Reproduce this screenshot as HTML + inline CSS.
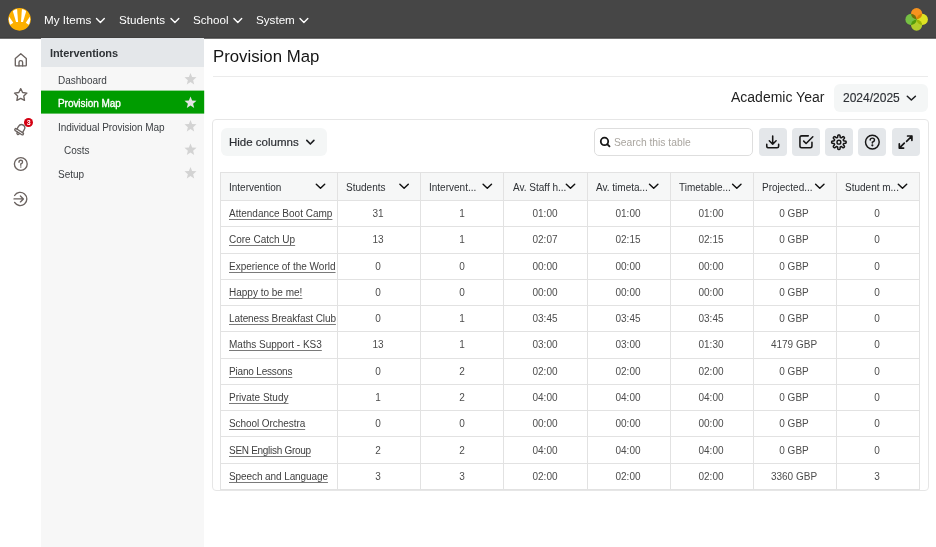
<!DOCTYPE html>
<html><head><meta charset="utf-8">
<style>
*{box-sizing:border-box;margin:0;padding:0}
html,body{width:936px;height:547px;overflow:hidden;background:#fff;font-family:"Liberation Sans",sans-serif;color:#333}
.a{position:absolute;white-space:nowrap}
.t{position:absolute;white-space:nowrap;line-height:1}
body>*{will-change:transform}
</style></head><body>

<svg class="a" style="left:0;top:0" width="936" height="40"><rect x="0" y="0" width="936" height="38.5" fill="#464646"/><rect x="0" y="37" width="936" height="1.5" fill="#3f3f3f"/></svg>
<svg class="a" style="left:7px;top:7px" width="25" height="25" viewBox="0 0 547 547">
<defs><clipPath id="lc"><circle cx="274" cy="270" r="234"/></clipPath></defs>
<circle cx="274" cy="270" r="247" fill="#fdb000"/>
<g clip-path="url(#lc)" fill="#fff">
<polygon points="95,-20 215,-40 242,328 198,328"/>
<polygon points="453,-20 333,-40 306,328 350,328"/>
<polygon points="-10,126 137,342 -15,455"/>
<polygon points="558,126 411,342 563,455"/>
</g></svg>
<div class="t" style="left:44.0px;top:14px;font-size:11.65px;color:#fff">My Items</div>
<div class="t" style="left:118.5px;top:14px;font-size:11.65px;color:#fff">Students</div>
<div class="t" style="left:193.3px;top:14px;font-size:11.65px;color:#fff">School</div>
<div class="t" style="left:255.6px;top:14px;font-size:11.65px;color:#fff">System</div>
<svg class="a" style="left:0;top:0" width="936" height="38" fill="none" stroke="#fff" stroke-width="1.4" stroke-linecap="round" stroke-linejoin="round">
<path d="M96.5 18.6 L100.4 22.5 L104.3 18.6"/>
<path d="M171.0 18.6 L174.9 22.5 L178.8 18.6"/>
<path d="M233.9 18.6 L237.8 22.5 L241.70000000000002 18.6"/>
<path d="M300.0 18.6 L303.9 22.5 L307.8 18.6"/>
</svg>
<svg class="a" style="left:896px;top:0" width="40" height="38" viewBox="896 0 40 38">
<g style="isolation:isolate">
<circle cx="916.6" cy="13.6" r="5.6" fill="#f7931e"/>
<circle cx="911" cy="19.4" r="5.6" fill="#76c043" style="mix-blend-mode:multiply"/>
<circle cx="922.3" cy="19.4" r="5.6" fill="#dfe223" style="mix-blend-mode:multiply"/>
<circle cx="916.6" cy="25.1" r="5.6" fill="#b3cd2b" style="mix-blend-mode:multiply"/>
</g>
</svg>
<svg class="a" style="left:0;top:38px" width="41" height="200" viewBox="0 38 41 200" fill="none" stroke="#6b6360" stroke-width="1.35" stroke-linejoin="round" stroke-linecap="round">
<path d="M15.3 58.6 L20.8 53.8 L26.3 58.6 L26.3 65.2 Q26.3 65.9 25.6 65.9 L16 65.9 Q15.3 65.9 15.3 65.2 Z"/>
<path d="M19 65.9 L19 62.2 Q19 60.6 20.8 60.6 Q22.6 60.6 22.6 62.2 L22.6 65.9"/>
<path d="M20.7 88.6 L22.6 92.5 L26.9 93.1 L23.8 96.1 L24.5 100.4 L20.7 98.4 L16.9 100.4 L17.6 96.1 L14.5 93.1 L18.8 92.5 Z"/>
<g transform="rotate(32 20.5 129.5)">
<path d="M17.2 131 L17.2 128 Q17.2 124.3 20.5 124.3 Q23.8 124.3 23.8 128 L23.8 131"/>
<rect x="15.6" y="131" width="9.8" height="2.2" rx="1"/>
<path d="M19.2 133.4 Q19.2 135.2 20.5 135.2 Q21.8 135.2 21.8 133.4"/>
</g>
<circle cx="20.8" cy="164" r="6.4"/>
<path d="M19 162.3 Q19 160.2 20.8 160.2 Q22.6 160.2 22.6 162 Q22.6 163.3 20.8 164 L20.8 165.2"/>
<path d="M14.6 195.5 A6.6 6.6 0 1 1 14.6 202.4"/>
<path d="M14 198.9 L23.4 198.9 M20.4 195.9 L23.4 198.9 L20.4 201.9"/>
</svg>
<svg class="a" style="left:0;top:0" width="41" height="220"><circle cx="20.8" cy="167.1" r=".75" fill="#6b6360"/></svg>
<div class="a" style="left:24.1px;top:118.1px;width:9.2px;height:9.2px;border-radius:50%;background:#d40012;color:#fff;font-size:7px;font-weight:bold;line-height:9.4px;text-align:center">3</div>
<div class="a" style="left:41px;top:38px;width:163.2px;height:509px;background:#f7f7f7"></div>
<div class="a" style="left:41px;top:38px;width:163.2px;height:29.2px;background:#e4e7ea"></div>
<div class="t" style="left:49.6px;top:48px;font-size:11px;font-weight:bold;letter-spacing:-0.08px;color:#2f3337">Interventions</div>
<svg class="a" style="left:41px;top:89px" width="164" height="27"><rect x="0" y="1.6" width="163.2" height="23" fill="#009c00"/></svg>
<div class="t" style="left:58px;top:76px;font-size:10px;letter-spacing:0px;color:#3d4044">Dashboard</div>
<div class="t" style="left:58px;top:99px;font-size:10px;-webkit-text-stroke:0.35px #fff;letter-spacing:-0.05px;color:#fff">Provision Map</div>
<div class="t" style="left:58px;top:123px;font-size:10px;letter-spacing:-0.08px;color:#3d4044">Individual Provision Map</div>
<div class="t" style="left:63.5px;top:146px;font-size:10px;letter-spacing:0px;color:#3d4044">Costs</div>
<div class="t" style="left:58px;top:170px;font-size:10px;letter-spacing:0px;color:#3d4044">Setup</div>
<svg class="a" style="left:0;top:0" width="210" height="200">
<polygon points="190.50,73.00 192.12,77.08 196.49,77.35 193.12,80.15 194.20,84.40 190.50,82.05 186.80,84.40 187.88,80.15 184.51,77.35 188.88,77.08" fill="#d3d3d3"/>
<polygon points="190.50,96.50 192.12,100.58 196.49,100.85 193.12,103.65 194.20,107.90 190.50,105.55 186.80,107.90 187.88,103.65 184.51,100.85 188.88,100.58" fill="#e4e4e4"/>
<polygon points="190.50,120.00 192.12,124.08 196.49,124.35 193.12,127.15 194.20,131.40 190.50,129.05 186.80,131.40 187.88,127.15 184.51,124.35 188.88,124.08" fill="#d3d3d3"/>
<polygon points="190.50,143.50 192.12,147.58 196.49,147.85 193.12,150.65 194.20,154.90 190.50,152.55 186.80,154.90 187.88,150.65 184.51,147.85 188.88,147.58" fill="#d3d3d3"/>
<polygon points="190.50,167.00 192.12,171.08 196.49,171.35 193.12,174.15 194.20,178.40 190.50,176.05 186.80,178.40 187.88,174.15 184.51,171.35 188.88,171.08" fill="#d3d3d3"/>
</svg>
<div class="t" style="left:212.8px;top:49px;font-size:16.8px;color:#151515">Provision Map</div>
<div class="a" style="left:212.5px;top:75.9px;width:715.2px;height:1.4px;background:#ebebeb"></div>
<div class="t" style="left:730.6px;top:90px;font-size:14px;color:#1f1f1f">Academic Year</div>
<div class="a" style="left:833.6px;top:84px;width:93.7px;height:27.6px;background:#f4f6f6;border-radius:6px"></div>
<div class="t" style="left:842.6px;top:92px;font-size:12px;-webkit-text-stroke:0.15px #2d3035;color:#2d3035">2024/2025</div>
<div class="a" style="left:212.4px;top:119.2px;width:716.6px;height:372.30px;border:1px solid #e6e6e6;border-radius:4px"></div>
<div class="a" style="left:221px;top:128px;width:106px;height:27.8px;background:#f4f6f6;border-radius:6px"></div>
<div class="t" style="left:229px;top:136.6px;font-size:11.5px;-webkit-text-stroke:0.2px #2d3035;color:#2d3035">Hide columns</div>
<div class="a" style="left:594.2px;top:128.3px;width:158.8px;height:27.5px;border:1px solid #dedede;border-radius:5px"></div>
<div class="t" style="left:613.6px;top:138px;font-size:10.3px;color:#a9a59f">Search this table</div>
<div class="a" style="left:758.9px;top:128.3px;width:27.6px;height:27.5px;background:#e4e7ea;border-radius:4px"></div>
<div class="a" style="left:792.0px;top:128.3px;width:27.6px;height:27.5px;background:#e4e7ea;border-radius:4px"></div>
<div class="a" style="left:825.1px;top:128.3px;width:27.6px;height:27.5px;background:#e4e7ea;border-radius:4px"></div>
<div class="a" style="left:858.3px;top:128.3px;width:27.6px;height:27.5px;background:#e4e7ea;border-radius:4px"></div>
<div class="a" style="left:891.6px;top:128.3px;width:27.6px;height:27.5px;background:#e4e7ea;border-radius:4px"></div>
<svg class="a" style="left:0;top:0" width="936" height="200" fill="none" stroke="#161616" stroke-width="1.55" stroke-linecap="round" stroke-linejoin="round">
<path d="M306.8 140.4 L310.35 144 L313.9 140.4" stroke="#1d1f22" stroke-width="1.65"/>
<path d="M907.3 96.2 L911.35 100 L915.4 96.2" stroke="#1d1f22"/>
<circle cx="604.5" cy="141.4" r="3.7" stroke-width="1.8"/>
<path d="M607.4 144.3 L609.5 146.4" stroke-width="1.8"/>
<path d="M766.75 144.3 V146.2 Q766.75 147.75 768.3 147.75 H777.1 Q778.65 147.75 778.65 146.2 V144.3"/>
<path d="M772.7 135.9 V144.2 M769.3 140.8 L772.7 144.2 L776.1 140.8"/>
<path d="M811.95 142.2 V146 Q811.95 147.75 810.2 147.75 H801.7 Q799.95 147.75 799.95 146 V137.6 Q799.95 135.85 801.7 135.85 H808.3"/>
<path d="M803.7 141.1 L806.1 143.5 L812.8 136.8"/>
<path d="M838.90 134.95 L839.09 134.96 L839.28 134.97 L839.47 135.01 L839.65 135.08 L839.82 135.23 L839.96 135.51 L840.05 135.98 L840.10 136.55 L840.14 137.02 L840.21 137.31 L840.30 137.46 L840.41 137.55 L840.52 137.62 L840.64 137.67 L840.76 137.72 L840.87 137.77 L840.99 137.81 L841.12 137.84 L841.26 137.86 L841.43 137.81 L841.68 137.66 L842.04 137.36 L842.48 136.98 L842.88 136.72 L843.18 136.62 L843.40 136.64 L843.58 136.72 L843.74 136.82 L843.89 136.94 L844.03 137.07 L844.16 137.21 L844.28 137.36 L844.38 137.52 L844.46 137.70 L844.48 137.92 L844.38 138.22 L844.12 138.62 L843.74 139.06 L843.44 139.42 L843.29 139.67 L843.24 139.84 L843.26 139.98 L843.29 140.11 L843.33 140.23 L843.38 140.34 L843.43 140.46 L843.48 140.58 L843.55 140.69 L843.64 140.80 L843.79 140.89 L844.08 140.96 L844.55 141.00 L845.12 141.05 L845.59 141.14 L845.87 141.28 L846.02 141.45 L846.09 141.63 L846.13 141.82 L846.14 142.01 L846.15 142.20 L846.14 142.39 L846.13 142.58 L846.09 142.77 L846.02 142.95 L845.87 143.12 L845.59 143.26 L845.12 143.35 L844.55 143.40 L844.08 143.44 L843.79 143.51 L843.64 143.60 L843.55 143.71 L843.48 143.82 L843.43 143.94 L843.38 144.06 L843.33 144.17 L843.29 144.29 L843.26 144.42 L843.24 144.56 L843.29 144.73 L843.44 144.98 L843.74 145.34 L844.12 145.78 L844.38 146.18 L844.48 146.48 L844.46 146.70 L844.38 146.88 L844.28 147.04 L844.16 147.19 L844.03 147.33 L843.89 147.46 L843.74 147.58 L843.58 147.68 L843.40 147.76 L843.18 147.78 L842.88 147.68 L842.48 147.42 L842.04 147.04 L841.68 146.74 L841.43 146.59 L841.26 146.54 L841.12 146.56 L840.99 146.59 L840.87 146.63 L840.76 146.68 L840.64 146.73 L840.52 146.78 L840.41 146.85 L840.30 146.94 L840.21 147.09 L840.14 147.38 L840.10 147.85 L840.05 148.42 L839.96 148.89 L839.82 149.17 L839.65 149.32 L839.47 149.39 L839.28 149.43 L839.09 149.44 L838.90 149.45 L838.71 149.44 L838.52 149.43 L838.33 149.39 L838.15 149.32 L837.98 149.17 L837.84 148.89 L837.75 148.42 L837.70 147.85 L837.66 147.38 L837.59 147.09 L837.50 146.94 L837.39 146.85 L837.28 146.78 L837.16 146.73 L837.04 146.68 L836.93 146.63 L836.81 146.59 L836.68 146.56 L836.54 146.54 L836.37 146.59 L836.12 146.74 L835.76 147.04 L835.32 147.42 L834.92 147.68 L834.62 147.78 L834.40 147.76 L834.22 147.68 L834.06 147.58 L833.91 147.46 L833.77 147.33 L833.64 147.19 L833.52 147.04 L833.42 146.88 L833.34 146.70 L833.32 146.48 L833.42 146.18 L833.68 145.78 L834.06 145.34 L834.36 144.98 L834.51 144.73 L834.56 144.56 L834.54 144.42 L834.51 144.29 L834.47 144.17 L834.42 144.06 L834.37 143.94 L834.32 143.82 L834.25 143.71 L834.16 143.60 L834.01 143.51 L833.72 143.44 L833.25 143.40 L832.68 143.35 L832.21 143.26 L831.93 143.12 L831.78 142.95 L831.71 142.77 L831.67 142.58 L831.66 142.39 L831.65 142.20 L831.66 142.01 L831.67 141.82 L831.71 141.63 L831.78 141.45 L831.93 141.28 L832.21 141.14 L832.68 141.05 L833.25 141.00 L833.72 140.96 L834.01 140.89 L834.16 140.80 L834.25 140.69 L834.32 140.58 L834.37 140.46 L834.42 140.34 L834.47 140.23 L834.51 140.11 L834.54 139.98 L834.56 139.84 L834.51 139.67 L834.36 139.42 L834.06 139.06 L833.68 138.62 L833.42 138.22 L833.32 137.92 L833.34 137.70 L833.42 137.52 L833.52 137.36 L833.64 137.21 L833.77 137.07 L833.91 136.94 L834.06 136.82 L834.22 136.72 L834.40 136.64 L834.62 136.62 L834.92 136.72 L835.32 136.98 L835.76 137.36 L836.12 137.66 L836.37 137.81 L836.54 137.86 L836.68 137.84 L836.81 137.81 L836.93 137.77 L837.04 137.72 L837.16 137.67 L837.28 137.62 L837.39 137.55 L837.50 137.46 L837.59 137.31 L837.66 137.02 L837.70 136.55 L837.75 135.98 L837.84 135.51 L837.98 135.23 L838.15 135.08 L838.33 135.01 L838.52 134.97 L838.71 134.96Z" stroke-width="1.5"/>
<circle cx="838.9" cy="142.2" r="1.9" stroke-width="1.45"/>
<circle cx="872.35" cy="142.05" r="6.85" stroke-width="1.45"/>
<path d="M870.2 140.1 Q870.2 138.1 872.35 138.1 Q874.5 138.1 874.5 140.1 Q874.5 141.5 872.35 142.2 V143" stroke-width="1.45"/>
<circle cx="872.35" cy="145.3" r=".5" stroke-width="1.2"/>
<path d="M907.6 136 H911.9 V140.3 M911.9 136 L906.6 141.3" stroke-width="1.7"/>
<path d="M899.3 143.9 V148.1 H903.6 M899.3 148.1 L904.3 143.1" stroke-width="1.7"/>
</svg>
<div class="a" style="left:220px;top:172px;width:699.00px;height:28.00px;background:#f6f7f7"></div>
<div class="a" style="left:220px;top:172px;width:1px;height:317.97px;background:#e2e2e2"></div>
<div class="a" style="left:337px;top:172px;width:1px;height:317.97px;background:#e2e2e2"></div>
<div class="a" style="left:420.2px;top:172px;width:1px;height:317.97px;background:#e2e2e2"></div>
<div class="a" style="left:503.4px;top:172px;width:1px;height:317.97px;background:#e2e2e2"></div>
<div class="a" style="left:587px;top:172px;width:1px;height:317.97px;background:#e2e2e2"></div>
<div class="a" style="left:670.2px;top:172px;width:1px;height:317.97px;background:#e2e2e2"></div>
<div class="a" style="left:753.3px;top:172px;width:1px;height:317.97px;background:#e2e2e2"></div>
<div class="a" style="left:836.3px;top:172px;width:1px;height:317.97px;background:#e2e2e2"></div>
<div class="a" style="left:919px;top:172px;width:1px;height:317.97px;background:#e2e2e2"></div>
<div class="a" style="left:220px;top:172.00px;width:700.00px;height:1px;background:#e2e2e2"></div>
<div class="a" style="left:220px;top:200.00px;width:700.00px;height:1px;background:#e2e2e2"></div>
<div class="a" style="left:220px;top:226.27px;width:700.00px;height:1px;background:#e2e2e2"></div>
<div class="a" style="left:220px;top:252.54px;width:700.00px;height:1px;background:#e2e2e2"></div>
<div class="a" style="left:220px;top:278.81px;width:700.00px;height:1px;background:#e2e2e2"></div>
<div class="a" style="left:220px;top:305.08px;width:700.00px;height:1px;background:#e2e2e2"></div>
<div class="a" style="left:220px;top:331.35px;width:700.00px;height:1px;background:#e2e2e2"></div>
<div class="a" style="left:220px;top:357.62px;width:700.00px;height:1px;background:#e2e2e2"></div>
<div class="a" style="left:220px;top:383.89px;width:700.00px;height:1px;background:#e2e2e2"></div>
<div class="a" style="left:220px;top:410.16px;width:700.00px;height:1px;background:#e2e2e2"></div>
<div class="a" style="left:220px;top:436.43px;width:700.00px;height:1px;background:#e2e2e2"></div>
<div class="a" style="left:220px;top:462.70px;width:700.00px;height:1px;background:#e2e2e2"></div>
<div class="a" style="left:220px;top:488.97px;width:700.00px;height:1px;background:#e2e2e2"></div>
<div class="t" style="left:228.80px;top:183.00px;font-size:10px;color:#2f3236">Intervention</div>
<div class="t" style="left:345.80px;top:183.00px;font-size:10px;color:#2f3236">Students</div>
<div class="t" style="left:429.40px;top:183.00px;font-size:10px;color:#2f3236">Intervent...</div>
<div class="t" style="left:512.60px;top:183.00px;font-size:10px;color:#2f3236">Av. Staff h...</div>
<div class="t" style="left:595.80px;top:183.00px;font-size:10px;color:#2f3236">Av. timeta...</div>
<div class="t" style="left:679.00px;top:183.00px;font-size:10px;color:#2f3236">Timetable...</div>
<div class="t" style="left:762.10px;top:183.00px;font-size:10px;color:#2f3236">Projected...</div>
<div class="t" style="left:845.10px;top:183.00px;font-size:10px;color:#2f3236">Student m...</div>
<svg class="a" style="left:0;top:0" width="936" height="200" fill="none" stroke="#111" stroke-width="1.45" stroke-linecap="round" stroke-linejoin="round">
<path d="M316.30 184.3 L320.50 188.3 L324.70 184.3"/>
<path d="M399.90 184.3 L404.10 188.3 L408.30 184.3"/>
<path d="M483.10 184.3 L487.30 188.3 L491.50 184.3"/>
<path d="M566.30 184.3 L570.50 188.3 L574.70 184.3"/>
<path d="M649.50 184.3 L653.70 188.3 L657.90 184.3"/>
<path d="M732.60 184.3 L736.80 188.3 L741.00 184.3"/>
<path d="M815.60 184.3 L819.80 188.3 L824.00 184.3"/>
<path d="M898.30 184.3 L902.50 188.3 L906.70 184.3"/>
</svg>
<div class="t" style="left:228.60px;top:209.00px;font-size:10px;letter-spacing:0px;color:#3f3f3f;text-decoration:underline;text-decoration-color:#7a7a7a;text-underline-offset:1.5px">Attendance Boot Camp</div>
<div class="t" style="left:338.30px;width:80px;text-align:center;top:209.00px;font-size:10px;color:#4d4d4d">31</div>
<div class="t" style="left:421.70px;width:80px;text-align:center;top:209.00px;font-size:10px;color:#4d4d4d">1</div>
<div class="t" style="left:504.90px;width:80px;text-align:center;top:209.00px;font-size:10px;color:#4d4d4d">01:00</div>
<div class="t" style="left:588.10px;width:80px;text-align:center;top:209.00px;font-size:10px;color:#4d4d4d">01:00</div>
<div class="t" style="left:671.25px;width:80px;text-align:center;top:209.00px;font-size:10px;color:#4d4d4d">01:00</div>
<div class="t" style="left:754.30px;width:80px;text-align:center;top:209.00px;font-size:10px;color:#4d4d4d">0 GBP</div>
<div class="t" style="left:837.15px;width:80px;text-align:center;top:209.00px;font-size:10px;color:#4d4d4d">0</div>
<div class="t" style="left:228.60px;top:235.00px;font-size:10px;letter-spacing:0px;color:#3f3f3f;text-decoration:underline;text-decoration-color:#7a7a7a;text-underline-offset:1.5px">Core Catch Up</div>
<div class="t" style="left:338.30px;width:80px;text-align:center;top:235.00px;font-size:10px;color:#4d4d4d">13</div>
<div class="t" style="left:421.70px;width:80px;text-align:center;top:235.00px;font-size:10px;color:#4d4d4d">1</div>
<div class="t" style="left:504.90px;width:80px;text-align:center;top:235.00px;font-size:10px;color:#4d4d4d">02:07</div>
<div class="t" style="left:588.10px;width:80px;text-align:center;top:235.00px;font-size:10px;color:#4d4d4d">02:15</div>
<div class="t" style="left:671.25px;width:80px;text-align:center;top:235.00px;font-size:10px;color:#4d4d4d">02:15</div>
<div class="t" style="left:754.30px;width:80px;text-align:center;top:235.00px;font-size:10px;color:#4d4d4d">0 GBP</div>
<div class="t" style="left:837.15px;width:80px;text-align:center;top:235.00px;font-size:10px;color:#4d4d4d">0</div>
<div class="t" style="left:228.60px;top:262.00px;font-size:10px;letter-spacing:0px;color:#3f3f3f;text-decoration:underline;text-decoration-color:#7a7a7a;text-underline-offset:1.5px">Experience of the World</div>
<div class="t" style="left:338.30px;width:80px;text-align:center;top:262.00px;font-size:10px;color:#4d4d4d">0</div>
<div class="t" style="left:421.70px;width:80px;text-align:center;top:262.00px;font-size:10px;color:#4d4d4d">0</div>
<div class="t" style="left:504.90px;width:80px;text-align:center;top:262.00px;font-size:10px;color:#4d4d4d">00:00</div>
<div class="t" style="left:588.10px;width:80px;text-align:center;top:262.00px;font-size:10px;color:#4d4d4d">00:00</div>
<div class="t" style="left:671.25px;width:80px;text-align:center;top:262.00px;font-size:10px;color:#4d4d4d">00:00</div>
<div class="t" style="left:754.30px;width:80px;text-align:center;top:262.00px;font-size:10px;color:#4d4d4d">0 GBP</div>
<div class="t" style="left:837.15px;width:80px;text-align:center;top:262.00px;font-size:10px;color:#4d4d4d">0</div>
<div class="t" style="left:228.60px;top:288.00px;font-size:10px;letter-spacing:0px;color:#3f3f3f;text-decoration:underline;text-decoration-color:#7a7a7a;text-underline-offset:1.5px">Happy to be me!</div>
<div class="t" style="left:338.30px;width:80px;text-align:center;top:288.00px;font-size:10px;color:#4d4d4d">0</div>
<div class="t" style="left:421.70px;width:80px;text-align:center;top:288.00px;font-size:10px;color:#4d4d4d">0</div>
<div class="t" style="left:504.90px;width:80px;text-align:center;top:288.00px;font-size:10px;color:#4d4d4d">00:00</div>
<div class="t" style="left:588.10px;width:80px;text-align:center;top:288.00px;font-size:10px;color:#4d4d4d">00:00</div>
<div class="t" style="left:671.25px;width:80px;text-align:center;top:288.00px;font-size:10px;color:#4d4d4d">00:00</div>
<div class="t" style="left:754.30px;width:80px;text-align:center;top:288.00px;font-size:10px;color:#4d4d4d">0 GBP</div>
<div class="t" style="left:837.15px;width:80px;text-align:center;top:288.00px;font-size:10px;color:#4d4d4d">0</div>
<div class="t" style="left:228.60px;top:314.00px;font-size:10px;letter-spacing:-0.09px;color:#3f3f3f;text-decoration:underline;text-decoration-color:#7a7a7a;text-underline-offset:1.5px">Lateness Breakfast Club</div>
<div class="t" style="left:338.30px;width:80px;text-align:center;top:314.00px;font-size:10px;color:#4d4d4d">0</div>
<div class="t" style="left:421.70px;width:80px;text-align:center;top:314.00px;font-size:10px;color:#4d4d4d">1</div>
<div class="t" style="left:504.90px;width:80px;text-align:center;top:314.00px;font-size:10px;color:#4d4d4d">03:45</div>
<div class="t" style="left:588.10px;width:80px;text-align:center;top:314.00px;font-size:10px;color:#4d4d4d">03:45</div>
<div class="t" style="left:671.25px;width:80px;text-align:center;top:314.00px;font-size:10px;color:#4d4d4d">03:45</div>
<div class="t" style="left:754.30px;width:80px;text-align:center;top:314.00px;font-size:10px;color:#4d4d4d">0 GBP</div>
<div class="t" style="left:837.15px;width:80px;text-align:center;top:314.00px;font-size:10px;color:#4d4d4d">0</div>
<div class="t" style="left:228.60px;top:340.00px;font-size:10px;letter-spacing:0px;color:#3f3f3f;text-decoration:underline;text-decoration-color:#7a7a7a;text-underline-offset:1.5px">Maths Support - KS3</div>
<div class="t" style="left:338.30px;width:80px;text-align:center;top:340.00px;font-size:10px;color:#4d4d4d">13</div>
<div class="t" style="left:421.70px;width:80px;text-align:center;top:340.00px;font-size:10px;color:#4d4d4d">1</div>
<div class="t" style="left:504.90px;width:80px;text-align:center;top:340.00px;font-size:10px;color:#4d4d4d">03:00</div>
<div class="t" style="left:588.10px;width:80px;text-align:center;top:340.00px;font-size:10px;color:#4d4d4d">03:00</div>
<div class="t" style="left:671.25px;width:80px;text-align:center;top:340.00px;font-size:10px;color:#4d4d4d">01:30</div>
<div class="t" style="left:754.30px;width:80px;text-align:center;top:340.00px;font-size:10px;color:#4d4d4d">4179 GBP</div>
<div class="t" style="left:837.15px;width:80px;text-align:center;top:340.00px;font-size:10px;color:#4d4d4d">0</div>
<div class="t" style="left:228.60px;top:367.00px;font-size:10px;letter-spacing:-0.18px;color:#3f3f3f;text-decoration:underline;text-decoration-color:#7a7a7a;text-underline-offset:1.5px">Piano Lessons</div>
<div class="t" style="left:338.30px;width:80px;text-align:center;top:367.00px;font-size:10px;color:#4d4d4d">0</div>
<div class="t" style="left:421.70px;width:80px;text-align:center;top:367.00px;font-size:10px;color:#4d4d4d">2</div>
<div class="t" style="left:504.90px;width:80px;text-align:center;top:367.00px;font-size:10px;color:#4d4d4d">02:00</div>
<div class="t" style="left:588.10px;width:80px;text-align:center;top:367.00px;font-size:10px;color:#4d4d4d">02:00</div>
<div class="t" style="left:671.25px;width:80px;text-align:center;top:367.00px;font-size:10px;color:#4d4d4d">02:00</div>
<div class="t" style="left:754.30px;width:80px;text-align:center;top:367.00px;font-size:10px;color:#4d4d4d">0 GBP</div>
<div class="t" style="left:837.15px;width:80px;text-align:center;top:367.00px;font-size:10px;color:#4d4d4d">0</div>
<div class="t" style="left:228.60px;top:393.00px;font-size:10px;letter-spacing:0px;color:#3f3f3f;text-decoration:underline;text-decoration-color:#7a7a7a;text-underline-offset:1.5px">Private Study</div>
<div class="t" style="left:338.30px;width:80px;text-align:center;top:393.00px;font-size:10px;color:#4d4d4d">1</div>
<div class="t" style="left:421.70px;width:80px;text-align:center;top:393.00px;font-size:10px;color:#4d4d4d">2</div>
<div class="t" style="left:504.90px;width:80px;text-align:center;top:393.00px;font-size:10px;color:#4d4d4d">04:00</div>
<div class="t" style="left:588.10px;width:80px;text-align:center;top:393.00px;font-size:10px;color:#4d4d4d">04:00</div>
<div class="t" style="left:671.25px;width:80px;text-align:center;top:393.00px;font-size:10px;color:#4d4d4d">04:00</div>
<div class="t" style="left:754.30px;width:80px;text-align:center;top:393.00px;font-size:10px;color:#4d4d4d">0 GBP</div>
<div class="t" style="left:837.15px;width:80px;text-align:center;top:393.00px;font-size:10px;color:#4d4d4d">0</div>
<div class="t" style="left:228.60px;top:419.00px;font-size:10px;letter-spacing:-0.07px;color:#3f3f3f;text-decoration:underline;text-decoration-color:#7a7a7a;text-underline-offset:1.5px">School Orchestra</div>
<div class="t" style="left:338.30px;width:80px;text-align:center;top:419.00px;font-size:10px;color:#4d4d4d">0</div>
<div class="t" style="left:421.70px;width:80px;text-align:center;top:419.00px;font-size:10px;color:#4d4d4d">0</div>
<div class="t" style="left:504.90px;width:80px;text-align:center;top:419.00px;font-size:10px;color:#4d4d4d">00:00</div>
<div class="t" style="left:588.10px;width:80px;text-align:center;top:419.00px;font-size:10px;color:#4d4d4d">00:00</div>
<div class="t" style="left:671.25px;width:80px;text-align:center;top:419.00px;font-size:10px;color:#4d4d4d">00:00</div>
<div class="t" style="left:754.30px;width:80px;text-align:center;top:419.00px;font-size:10px;color:#4d4d4d">0 GBP</div>
<div class="t" style="left:837.15px;width:80px;text-align:center;top:419.00px;font-size:10px;color:#4d4d4d">0</div>
<div class="t" style="left:228.60px;top:446.00px;font-size:10px;letter-spacing:-0.29px;color:#3f3f3f;text-decoration:underline;text-decoration-color:#7a7a7a;text-underline-offset:1.5px">SEN English Group</div>
<div class="t" style="left:338.30px;width:80px;text-align:center;top:446.00px;font-size:10px;color:#4d4d4d">2</div>
<div class="t" style="left:421.70px;width:80px;text-align:center;top:446.00px;font-size:10px;color:#4d4d4d">2</div>
<div class="t" style="left:504.90px;width:80px;text-align:center;top:446.00px;font-size:10px;color:#4d4d4d">04:00</div>
<div class="t" style="left:588.10px;width:80px;text-align:center;top:446.00px;font-size:10px;color:#4d4d4d">04:00</div>
<div class="t" style="left:671.25px;width:80px;text-align:center;top:446.00px;font-size:10px;color:#4d4d4d">04:00</div>
<div class="t" style="left:754.30px;width:80px;text-align:center;top:446.00px;font-size:10px;color:#4d4d4d">0 GBP</div>
<div class="t" style="left:837.15px;width:80px;text-align:center;top:446.00px;font-size:10px;color:#4d4d4d">0</div>
<div class="t" style="left:228.60px;top:472.00px;font-size:10px;letter-spacing:-0.09px;color:#3f3f3f;text-decoration:underline;text-decoration-color:#7a7a7a;text-underline-offset:1.5px">Speech and Language</div>
<div class="t" style="left:338.30px;width:80px;text-align:center;top:472.00px;font-size:10px;color:#4d4d4d">3</div>
<div class="t" style="left:421.70px;width:80px;text-align:center;top:472.00px;font-size:10px;color:#4d4d4d">3</div>
<div class="t" style="left:504.90px;width:80px;text-align:center;top:472.00px;font-size:10px;color:#4d4d4d">02:00</div>
<div class="t" style="left:588.10px;width:80px;text-align:center;top:472.00px;font-size:10px;color:#4d4d4d">02:00</div>
<div class="t" style="left:671.25px;width:80px;text-align:center;top:472.00px;font-size:10px;color:#4d4d4d">02:00</div>
<div class="t" style="left:754.30px;width:80px;text-align:center;top:472.00px;font-size:10px;color:#4d4d4d">3360 GBP</div>
<div class="t" style="left:837.15px;width:80px;text-align:center;top:472.00px;font-size:10px;color:#4d4d4d">3</div>
</body></html>
